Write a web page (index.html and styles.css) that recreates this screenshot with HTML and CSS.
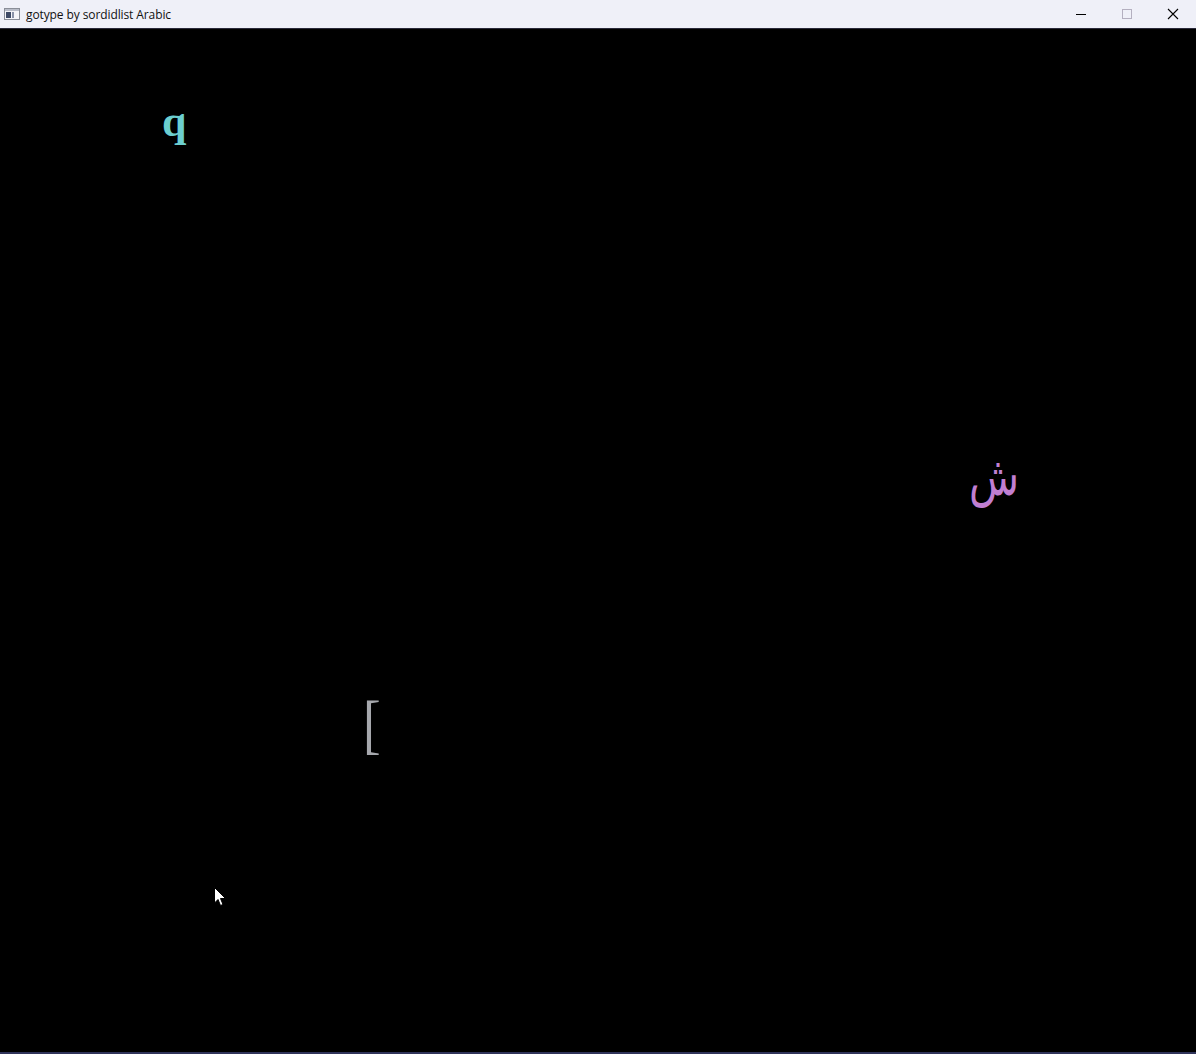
FILE: index.html
```html
<!DOCTYPE html>
<html>
<head>
<meta charset="utf-8">
<title>gotype by sordidlist Arabic</title>
<link rel="stylesheet" href="styles.css">
</head>
<body>
<div class="window">
  <header class="titlebar">
    <div class="title-left">
      <svg class="app-icon" width="16" height="16" viewBox="0 0 16 16">
        <rect x="0.5" y="2.5" width="15" height="11" fill="#f4f4f8" stroke="#8a8e98"/>
        <rect x="1" y="3" width="14" height="2" fill="#b8bcc8"/>
        <rect x="2" y="6" width="5" height="6" fill="#3e4a66"/>
        <rect x="8" y="6" width="2" height="6" fill="#8a92a8"/>
      </svg>
      <span class="title-text">gotype by sordidlist Arabic</span>
    </div>
    <div class="controls">
      <div class="ctl">
        <svg width="12" height="12" viewBox="0 0 12 12"><line x1="1" y1="6.5" x2="11" y2="6.5" stroke="#000" stroke-width="1"/></svg>
      </div>
      <div class="ctl">
        <svg width="12" height="12" viewBox="0 0 12 12"><rect x="1.5" y="1.5" width="9" height="9" fill="none" stroke="#b4b0c0" stroke-width="1"/></svg>
      </div>
      <div class="ctl">
        <svg width="12" height="12" viewBox="0 0 12 12"><path d="M1 1 L11 11 M11 1 L1 11" stroke="#000" stroke-width="1.1"/></svg>
      </div>
    </div>
  </header>
  <main class="canvas">
    <span class="glyph g-q">q</span>
    <span class="glyph g-shin" lang="ar" dir="rtl">ش</span>
    <span class="glyph g-bracket">[</span>
    <svg class="cursor" width="14" height="22" viewBox="0 0 14 22">
      <path d="M0.5 0.5 L0.5 16 L4 12.5 L6.5 18.5 L9 17.5 L6.5 11.5 L11.5 11.5 Z" fill="#fff" stroke="#000" stroke-width="1"/>
    </svg>
  </main>
</div>
</body>
</html>
```

FILE: styles.css
```css
html, body {
  margin: 0;
  padding: 0;
  background: #000;
  overflow: hidden;
}
.window {
  width: 1196px;
  height: 1054px;
  display: flex;
  flex-direction: column;
}
.titlebar {
  height: 29px;
  flex: 0 0 29px;
  background: #eff0f8;
  display: flex;
  align-items: center;
  justify-content: space-between;
  border-bottom: 1px solid #2a2a3a;
  box-sizing: border-box;
}
.title-left {
  display: flex;
  align-items: center;
  gap: 6px;
  padding-left: 4px;
}
.app-icon {
  display: block;
}
.title-text {
  font-family: "Open Sans", "Noto Sans", sans-serif;
  font-size: 12px;
  color: #111;
  letter-spacing: -0.1px;
}
.controls {
  display: flex;
  height: 28px;
}
.ctl {
  width: 46px;
  display: flex;
  align-items: center;
  justify-content: center;
}
.ctl svg { display: block; }
.canvas {
  flex: 1;
  position: relative;
  background: #000;
  border-bottom: 2px solid #30345a;
}
.glyph {
  position: absolute;
  line-height: 1;
  white-space: nowrap;
}
.g-q {
  left: 162px;
  top: 71px;
  font-family: "Liberation Serif", serif;
  font-weight: bold;
  font-size: 44px;
  color: #6ccfd0;
}
.g-shin {
  left: 969px;
  top: 422px;
  font-family: "DejaVu Sans", sans-serif;
  font-size: 41px;
  color: #c17fd2;
  transform: scaleY(1.3);
  transform-origin: left top;
}
.g-bracket {
  left: 363px;
  top: 662px;
  font-family: "Liberation Serif", serif;
  font-size: 66px;
  color: #a6a8ad;
  transform: scaleX(0.8);
  transform-origin: left top;
}
.cursor {
  position: absolute;
  left: 214px;
  top: 858px;
}
```
